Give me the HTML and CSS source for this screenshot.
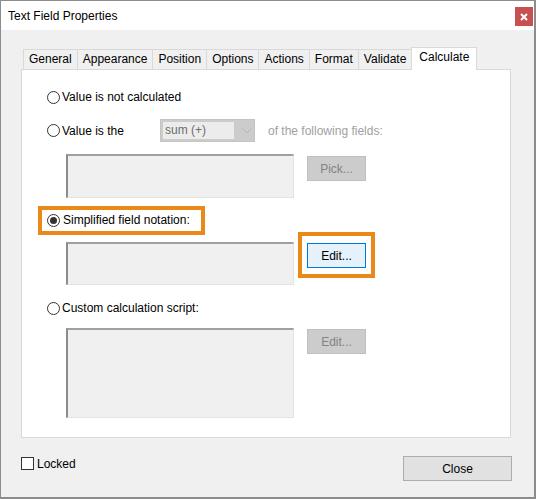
FILE: index.html
```html
<!DOCTYPE html>
<html>
<head>
<meta charset="utf-8">
<title>Text Field Properties</title>
<link rel="stylesheet" href="styles.css">
</head>
<body>
<div class="window">
  <div class="titlebar">
    <span class="title">Text Field Properties</span>
    <div class="close-x"><svg width="8" height="8" viewBox="0 0 8 8"><path d="M1 1 L7 7 M7 1 L1 7" stroke="#fff" stroke-width="2" fill="none"/></svg></div>
  </div>
  <div class="body">
    <div class="tabs">
      <div class="tab">General</div>
      <div class="tab">Appearance</div>
      <div class="tab">Position</div>
      <div class="tab">Options</div>
      <div class="tab">Actions</div>
      <div class="tab">Format</div>
      <div class="tab">Validate</div>
      <div class="tab active">Calculate</div>
    </div>
    <div class="panel">
      <div class="radio-row r1"><span class="radio"></span><span class="lbl">Value is not calculated</span></div>
      <div class="row r2">
        <div class="radio-row fixed"><span class="radio"></span><span class="lbl">Value is the</span></div>
        <div class="select"><span class="select-value">sum (+)</span><svg class="chev" width="10" height="6" viewBox="0 0 10 6"><path d="M0.5 0.5 L5 5 L9.5 0.5" stroke="#b4b4b4" fill="none"/></svg></div>
        <span class="disabled-text">of the following fields:</span>
      </div>
      <div class="field-row f1"><div class="textbox"></div><div class="btn disabled">Pick...</div></div>
      <div class="radio-row r3"><span class="highlight-wrap"><span class="radio checked"></span><span class="lbl">Simplified field notation:</span></span></div>
      <div class="field-row f2"><div class="textbox"></div><div class="btn primary highlighted">Edit...</div></div>
      <div class="radio-row r4"><span class="radio"></span><span class="lbl">Custom calculation script:</span></div>
      <div class="field-row f3"><div class="textbox"></div><div class="btn disabled">Edit...</div></div>
    </div>
    <div class="footer">
      <div class="check-row"><span class="checkbox"></span><span class="lbl">Locked</span></div>
      <div class="btn close-btn">Close</div>
    </div>
  </div>
</div>
</body>
</html>
```
FILE: styles.css
```css
* { box-sizing: border-box; }
html, body { margin: 0; padding: 0; background: #ffffff; }
body {
  font-family: "Liberation Sans", Arial, sans-serif;
  font-size: 12px;
  color: #000;
}
.window {
  width: 536px;
  height: 499px;
  border-style: solid;
  border-color: #8c8c8c;
  border-width: 1px 2px 2px 1px;
  display: flex;
  flex-direction: column;
  background: #f0f0f0;
}
.titlebar {
  height: 29px;
  background: #ffffff;
  display: flex;
  align-items: flex-start;
  justify-content: space-between;
  padding-left: 7px;
}
.title {
  line-height: 16px;
  margin-top: 7px;
}
.close-x {
  width: 18px;
  height: 19px;
  margin-top: 6px;
  margin-right: 1px;
  background: #c75050;
  display: flex;
  align-items: center;
  justify-content: center;
}
.close-x svg { display: block; }
.body {
  flex: 1;
  display: flex;
  flex-direction: column;
  padding: 17px 22px 16px 20px;
}
.tabs {
  display: flex;
  align-items: flex-end;
  height: 22px;
  margin-left: 2px;
  position: relative;
  z-index: 1;
}
.tab {
  height: 20px;
  line-height: 19px;
  padding: 0 5px;
  border: 1px solid #d9d9d9;
  border-bottom: none;
  background: #f0f0f0;
  margin-left: -1px;
}
.tab:first-child { margin-left: 0; }
.tab.active {
  height: 23px;
  margin-bottom: -1px;
  background: #ffffff;
  line-height: 19px;
  padding: 0 7px;
}
.panel {
  flex: 1;
  margin-right: 1px;
  background: #ffffff;
  border: 1px solid #d9d9d9;
  padding: 19px 0 0 25px;
  display: flex;
  flex-direction: column;
  align-items: flex-start;
}
.radio-row {
  display: flex;
  align-items: center;
  height: 16px;
  line-height: 16px;
}
.radio-row .lbl { margin-left: 2px; }
.radio {
  width: 13px;
  height: 13px;
  border: 1px solid #333333;
  border-radius: 50%;
  background: #ffffff;
  display: flex;
  align-items: center;
  justify-content: center;
  flex: none;
}
.radio.checked::before {
  content: "";
  width: 7px;
  height: 7px;
  border-radius: 50%;
  background: #333333;
}
.row {
  display: flex;
  align-items: center;
}
.r2 { margin-top: 14px; height: 23px; }
.r2 .fixed { width: 113px; flex: none; }
.select {
  width: 95px;
  height: 23px;
  background: #cccccc;
  border: 1px solid #c4c4c4;
  display: flex;
  align-items: center;
  padding: 2px;
}
.select-value {
  width: 72px;
  height: 17px;
  line-height: 17px;
  background: #ececec;
  color: #6d6d6d;
  padding-left: 2px;
}
.chev { margin-left: 8px; }
.disabled-text {
  color: #a0a0a0;
  margin-left: 13px;
}
.field-row {
  display: flex;
  align-items: flex-start;
  margin-left: 19px;
}
.textbox {
  width: 228px;
  background: #f0f0f0;
  border-style: solid;
  border-width: 2px 1px 1px 2px;
  border-color: #a0a0a0 #e3e3e3 #e3e3e3 #8c8c8c;
}
.f1 { margin-top: 12px; }
.f1 .textbox { height: 44px; }
.f1 .btn { margin-top: 2px; }
.r3 { margin-top: 14px; }
.f2 { margin-top: 14px; }
.f2 .textbox { height: 43px; }
.f2 .btn { margin-top: 1px; }
.r4 { margin-top: 15px; }
.f3 { margin-top: 12px; }
.f3 .textbox { height: 90px; }
.f3 .btn { margin-top: 1px; }
.btn {
  width: 59px;
  height: 25px;
  margin-left: 13px;
  border: 1px solid #adadad;
  background: #e1e1e1;
  display: flex;
  align-items: center;
  justify-content: center;
}
.btn.disabled {
  background: #cccccc;
  border-color: #bfbfbf;
  color: #838383;
}
.btn.primary {
  background: #e5f1fb;
  border-color: #0078d7;
}
.highlight-wrap {
  position: relative;
  display: flex;
  align-items: center;
  height: 16px;
}
.highlight-wrap::after,
.btn.highlighted::after {
  content: "";
  position: absolute;
  border: 4px solid #e8891a;
  pointer-events: none;
}
.highlight-wrap::after {
  top: -6px;
  bottom: -7px;
  left: -9px;
  right: -15px;
}
.highlight-wrap .lbl { margin-left: 3px; }
.btn.highlighted { position: relative; }
.btn.highlighted::after {
  top: -12px;
  bottom: -11px;
  left: -10px;
  right: -10px;
}
.footer {
  margin-top: 18px;
  height: 25px;
  display: flex;
  align-items: flex-start;
  justify-content: space-between;
}
.check-row {
  display: flex;
  align-items: center;
  height: 15px;
  margin-left: 0;
}
.checkbox {
  width: 13px;
  height: 13px;
  border: 1px solid #333333;
  background: #ffffff;
}
.check-row .lbl { margin-left: 3px; }
.close-btn {
  width: 109px;
  margin-left: 0;
}
```
